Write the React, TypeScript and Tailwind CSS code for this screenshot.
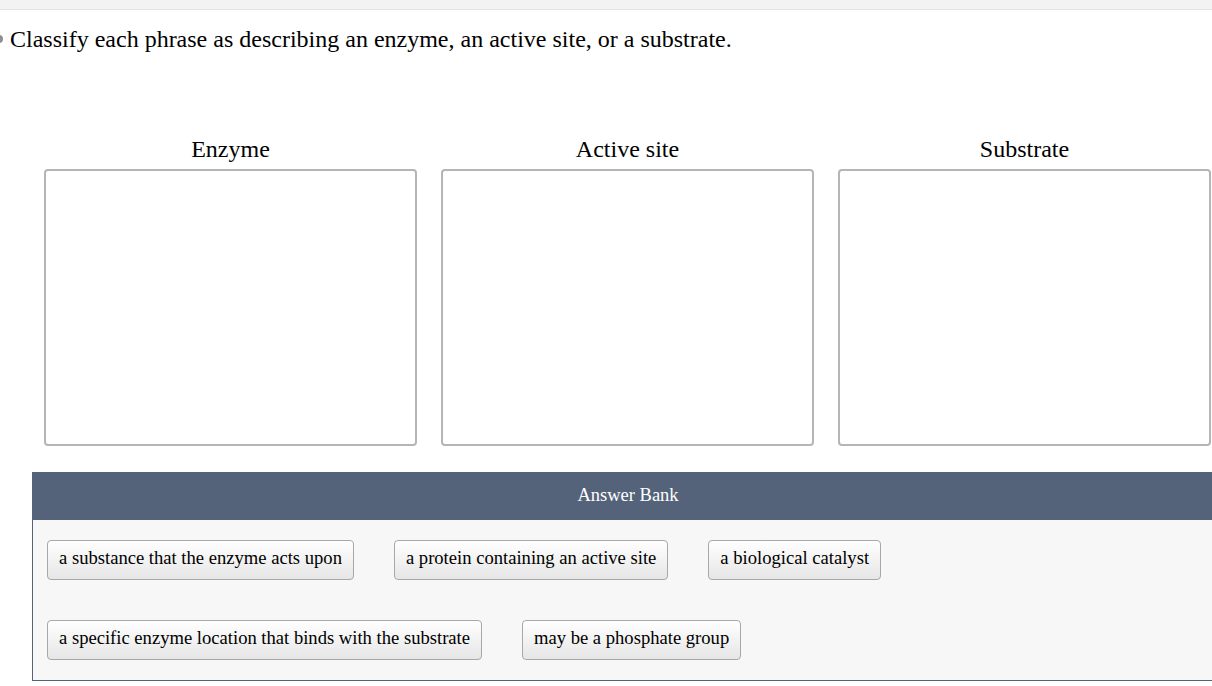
import React from 'react';

const columns = ['Enzyme', 'Active site', 'Substrate'];

const rows = [
    ['a substance that the enzyme acts upon', 'a protein containing an active site', 'a biological catalyst'],
    ['a specific enzyme location that binds with the substrate', 'may be a phosphate group'],
];

export default function App() {
    return (
        <div className="w-[1212px] h-[686px] overflow-hidden bg-white text-black font-['Liberation_Serif','Times_New_Roman',serif]">
            {/* top strip */}
            <div className="h-[10px] bg-[#f3f3f3] border-b border-[#e4e4e4]" />

            {/* question */}
            <div className="flex items-center h-[40px] mt-[9px]">
                <span className="-ml-[5px] mr-[7px] w-[8px] h-[8px] rounded-full bg-[#8f8f8f]" />
                <p className="text-[24px] leading-[28px]">
                    Classify each phrase as describing an enzyme, an active site, or a substrate.
                </p>
            </div>

            {/* drop targets */}
            <div className="ml-[32px] w-[1191px] mt-[76px] grid grid-cols-3">
                {columns.map((col) => (
                    <div key={col} className="flex flex-col items-center px-[12px]">
                        <div className="text-[24px] leading-[28px] h-[28px]">{col}</div>
                        <div className="mt-[6px] w-full h-[277px] border-2 border-[#b5b5b5] rounded-[4px] bg-white" />
                    </div>
                ))}
            </div>

            {/* answer bank */}
            <div className="ml-[32px] w-[1192px] mt-[26px]">
                <div className="h-[48px] bg-[#546379] flex items-center justify-center text-white text-[18.5px]">
                    Answer Bank
                </div>
                <div className="bg-[#f7f7f7] border-l border-b border-[#546379] h-[161px] pl-[14px] pt-[20px] flex flex-col gap-[40px]">
                    {rows.map((row, i) => (
                        <div key={i} className="flex gap-[40px]">
                            {row.map((item) => (
                                <div
                                    key={item}
                                    className="h-[40px] px-[11px] flex items-center text-[18.6px] leading-none rounded-[4px] border border-[#a8a8a8] bg-gradient-to-b from-[#ffffff] to-[#e6e6e6] whitespace-nowrap pb-[4px]"
                                >
                                    {item}
                                </div>
                            ))}
                        </div>
                    ))}
                </div>
            </div>
        </div>
    );
}
